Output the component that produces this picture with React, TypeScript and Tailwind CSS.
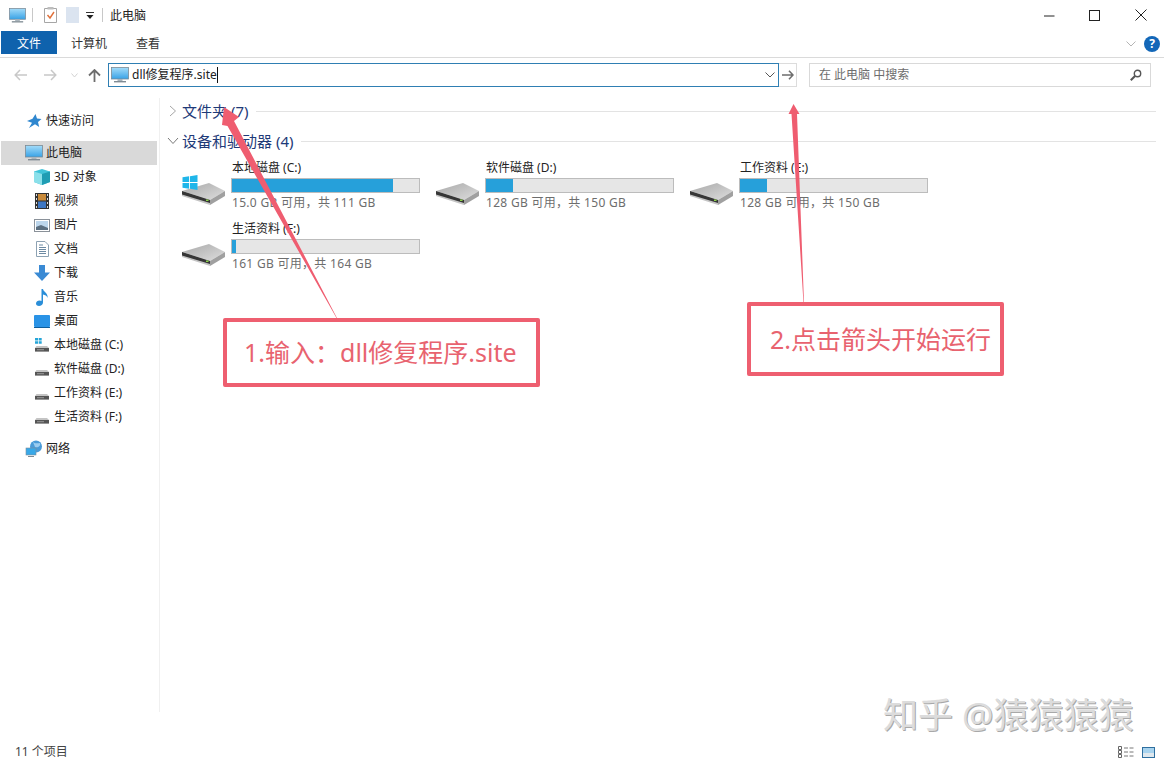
import React from "react";

function Pc({ s = 18 }: { s?: number }) {
  const id = `pc${s}`;
  return (
    <svg width={s} height={s} viewBox="0 0 18 18" className="shrink-0">
      <defs>
        <linearGradient id={id} x1="0" y1="0" x2="0" y2="1">
          <stop offset="0" stopColor="#a4dcf9" />
          <stop offset="1" stopColor="#38a2e6" />
        </linearGradient>
      </defs>
      <rect x="0.5" y="1.5" width="17" height="11.5" fill={`url(#${id})`} stroke="#7b8a96" strokeWidth="0.8" />
      <rect x="6.5" y="13" width="5" height="2" fill="#a9b4bc" />
      <rect x="3" y="15" width="12" height="1.4" fill="#7f8b94" />
    </svg>
  );
}

function Drive({ win }: { win?: boolean }) {
  return (
    <div className="relative w-[46px] h-[46px] shrink-0">
      <svg width="43" height="22" viewBox="0 0 43 22" className="absolute left-[1px] top-[22px]">
        <defs>
          <linearGradient id="dtop" x1="0" y1="0" x2="1" y2="1">
            <stop offset="0" stopColor="#a8a8a8" />
            <stop offset="1" stopColor="#dedede" />
          </linearGradient>
        </defs>
        <path d="M0 8 27 0 43 8 28 17Z" fill="url(#dtop)" />
        <path d="M0 8 28 17 28 22 0 13Z" fill="#c4c4c4" />
        <path d="M0 8 28 17 28 20 0 11.500Z" fill="#363636" />
        <path d="M28 17 43 8 43 13 28 22Z" fill="#a0a0a0" />
        <rect x="24" y="16.500" width="2.500" height="1.500" fill="#8ad04a" />
      </svg>
      {win && (
        <svg width="16" height="15" viewBox="0 0 17 17" className="absolute left-[1px] top-[14px]">
          <path d="M0 2.500 7.500 1.400V8H0ZM8.500 1.300 17 0V8H8.500ZM0 9H7.500V15.600L0 14.500ZM8.500 9H17V17L8.500 15.700Z" fill="#1fb6ea" />
        </svg>
      )}
    </div>
  );
}

function SmallDrive({ win }: { win?: boolean }) {
  return (
    <svg width="16" height="16" viewBox="0 0 16 16" className="shrink-0">
      {win && (
        <path d="M1 1h3v2.500H1ZM4.700 1h3v2.500H4.700ZM1 4.200h3v2.500H1ZM4.700 4.200h3v2.500H4.700Z" fill="#25a5d8" />
      )}
      <path d="M2.500 9 13 9 15 11 1 11Z" fill="#c4c4c4" />
      <rect x="1" y="11" width="14" height="3.600" fill="#555" />
      <rect x="3" y="12.200" width="7" height="1" fill="#999" />
    </svg>
  );
}

function NavIcon({ name }: { name: string }) {
  switch (name) {
    case "star":
      return (
        <svg width="16" height="16" viewBox="0 0 16 16" className="shrink-0">
          <path d="M9.500 1 11 5.500 15.500 6 12 9 13.200 14 9 11.300 3 15 6 9.800 1 8 6.500 5.800Z" fill="#2f87cf" />
        </svg>
      );
    case "cube":
      return (
        <svg width="18" height="18" viewBox="0 0 18 18" className="shrink-0">
          <path d="M1 3.500 9 1 17 3.500 17 14 9 17 1 14Z" fill="#3fc3d8" />
          <path d="M1 3.500 9 6 9 17 1 14Z" fill="#8be0ea" />
          <path d="M9 6 17 3.500 17 14 9 17Z" fill="#1f9db3" />
        </svg>
      );
    case "video":
      return (
        <svg width="14" height="16" viewBox="0 0 14 16" className="shrink-0">
          <rect width="14" height="16" fill="#333" />
          <rect x="3" y="1" width="8" height="6.500" fill="#c98a3a" />
          <rect x="3" y="8.500" width="8" height="6.500" fill="#3f78c4" />
          <path d="M1 1h1v2H1ZM1 5h1v2H1ZM1 9h1v2H1ZM1 13h1v2H1ZM12 1h1v2h-1ZM12 5h1v2h-1ZM12 9h1v2h-1ZM12 13h1v2h-1Z" fill="#ddd" />
        </svg>
      );
    case "pic":
      return (
        <svg width="16" height="13" viewBox="0 0 16 13" className="shrink-0">
          <rect x="0.500" y="0.500" width="15" height="12" fill="#fff" stroke="#8a9199" />
          <rect x="2" y="2" width="12" height="9" fill="#bcd6ec" />
          <path d="M2 8 7 6 14 9V11H2Z" fill="#5b6f80" />
        </svg>
      );
    case "doc":
      return (
        <svg width="13" height="16" viewBox="0 0 13 16" className="shrink-0">
          <path d="M.5.5H9L12.500 4V15.500H.5Z" fill="#fff" stroke="#8da2b3" />
          <path d="M3 4h4M3 6.500h7M3 8.500h7M3 10.500h7M3 12.500h7" stroke="#6d8aa3" strokeWidth="1" />
        </svg>
      );
    case "down":
      return (
        <svg width="16" height="16" viewBox="0 0 16 16" className="shrink-0">
          <path d="M5 0H11V7.500H16L8 16 0 7.500H5Z" fill="#3a8ad4" />
        </svg>
      );
    case "music":
      return (
        <svg width="13" height="17" viewBox="0 0 13 17" className="shrink-0">
          <path d="M5.500 0H7C7.300 3 12.500 4 11.500 9 11 6.500 9 6 7 5.500V13.500C7 15.500 5 17 3 17 1 17 0 16 0 14.500 0 12.800 1.800 11.600 3.500 11.600 4.400 11.600 5 11.800 5.500 12.100Z" fill="#2a8ed8" />
        </svg>
      );
    case "desk":
      return (
        <svg width="16" height="13" viewBox="0 0 16 13" className="shrink-0">
          <rect width="16" height="12" rx="1" fill="#2a93e6" />
          <rect x="0" y="12" width="16" height="1" fill="#0e5d9c" />
        </svg>
      );
    case "net":
      return (
        <svg width="18" height="18" viewBox="0 0 18 18" className="shrink-0">
          <circle cx="11" cy="6.500" r="6" fill="#4a9bd8" />
          <path d="M8 2C10 4 13 3 15 3 16 6 13 8 10 7Z" fill="#9ccdf0" />
          <rect x="1" y="8" width="10" height="7" fill="#38a8e8" stroke="#7d8d99" strokeWidth="0.6" />
          <rect x="3" y="16" width="6" height="1" fill="#7f8b94" />
        </svg>
      );
    default:
      return null;
  }
}

type Item = { label: string; icon: React.ReactNode };

const libs: Item[] = [
  { label: "3D 对象", icon: <NavIcon name="cube" /> },
  { label: "视频", icon: <NavIcon name="video" /> },
  { label: "图片", icon: <NavIcon name="pic" /> },
  { label: "文档", icon: <NavIcon name="doc" /> },
  { label: "下载", icon: <NavIcon name="down" /> },
  { label: "音乐", icon: <NavIcon name="music" /> },
  { label: "桌面", icon: <NavIcon name="desk" /> },
  { label: "本地磁盘 (C:)", icon: <SmallDrive win /> },
  { label: "软件磁盘 (D:)", icon: <SmallDrive /> },
  { label: "工作资料 (E:)", icon: <SmallDrive /> },
  { label: "生活资料 (F:)", icon: <SmallDrive /> },
];

function NavRow({ item }: { item: Item }) {
  return (
    <div className="h-[24px] flex items-center pl-[33px]">
      <span className="w-[18px] flex justify-center shrink-0">{item.icon}</span>
      <span className="ml-[3px] text-[12px] text-[#222]">{item.label}</span>
    </div>
  );
}

function DriveTile({ name, pct, info, win }: { name: string; pct: string; info: string; win?: boolean }) {
  return (
    <div className="w-[254px] h-[61px] flex items-start">
      <Drive win={win} />
      <div className="ml-[4px] w-[189px] -mt-[1px]">
        <div className="pl-[1px] text-[12px] leading-[16px] text-[#222] h-[18px] whitespace-nowrap">{name}</div>
        <div className="h-[15px] bg-[#e6e6e6] border border-[#bcbcbc]">
          <div className="h-full bg-[#26a0da]" style={{ width: pct }} />
        </div>
        <div className="pl-[1px] text-[12px] leading-[16px] mt-[2px] text-[#6d6d6d] whitespace-nowrap tracking-[0.3px]">{info}</div>
      </div>
    </div>
  );
}

function Chevron({ open }: { open?: boolean }) {
  return open ? (
    <svg width="12" height="8" viewBox="0 0 12 8" className="shrink-0"><path d="M1 1 6 6.500 11 1" fill="none" stroke="#7a7a7a" /></svg>
  ) : (
    <svg width="8" height="12" viewBox="0 0 8 12" className="shrink-0"><path d="M1 1 6.500 6 1 11" fill="none" stroke="#a6a6a6" /></svg>
  );
}

export default function App() {
  return (
    <div
      className="relative w-[1164px] h-[764px] bg-white overflow-hidden flex flex-col"
      style={{ fontFamily: '"Noto Sans", "Noto Sans CJK SC", sans-serif' }}
    >
      {/* title bar */}
      <div className="h-[31px] flex items-center shrink-0 pl-[9px] pb-[1px]">
        <Pc s={17} />
        <span className="ml-[6px] w-px h-[14px] bg-[#c8c8c8]" />
        <svg width="13" height="16" viewBox="0 0 13 16" className="ml-[11px]">
          <path d="M.5 1.500H12.500V15.500H.5Z" fill="#fff" stroke="#a6a6a6" />
          <rect x="3.500" y="0" width="6" height="2.500" fill="#bdbdbd" />
          <path d="M3.500 8 6 11 10 5" fill="none" stroke="#e0703a" strokeWidth="1.400" />
        </svg>
        <svg width="13" height="16" viewBox="0 0 13 16" className="ml-[9px]">
          <rect width="13" height="16" fill="#dbe4f0" />
        </svg>
        <svg width="8" height="8" viewBox="0 0 8 8" className="ml-[7px] mt-[2px]">
          <path d="M0 0.500H8" stroke="#333" />
          <path d="M0.500 3H7.500L4 7Z" fill="#222" />
        </svg>
        <span className="ml-[8px] w-px h-[14px] bg-[#c8c8c8]" />
        <span className="ml-[7px] text-[12px] text-[#222] mt-[2px]">此电脑</span>
        <div className="ml-auto flex items-center pr-[17px]">
          <svg width="11" height="11" viewBox="0 0 11 11"><path d="M0 6H10.500" stroke="#222" /></svg>
          <svg width="11" height="11" viewBox="0 0 11 11" className="ml-[34px]"><rect x="0.500" y="0.500" width="10" height="10" fill="none" stroke="#222" /></svg>
          <svg width="12" height="12" viewBox="0 0 12 12" className="ml-[35px]"><path d="M.5.5 11.500 11.500M11.500.5.5 11.500" stroke="#222" /></svg>
        </div>
      </div>

      {/* ribbon */}
      <div className="h-[27px] shrink-0 flex items-start border-b border-[#dadada] pl-[1px] relative">
        <div className="w-[56px] h-[23px] bg-[#0f62ad] text-white text-[12px] flex items-center justify-center pt-[2px]">文件</div>
        <div className="w-[64px] h-[23px] text-[12px] text-[#333] flex items-center justify-center pt-[2px]">计算机</div>
        <div className="w-[54px] h-[23px] text-[12px] text-[#333] flex items-center justify-center pt-[2px]">查看</div>
        <div className="ml-auto flex items-center h-[25px] pr-[4px]">
          <svg width="10" height="6" viewBox="0 0 10 6"><path d="M.5.5 5 5 9.500.5" fill="none" stroke="#b4b4b4" /></svg>
          <span className="ml-[8px] w-[16px] h-[16px] rounded-full bg-[#1367b8] text-white text-[12px] font-bold leading-[16px] text-center">?</span>
        </div>
      </div>

      {/* address row */}
      <div className="h-[40px] shrink-0 flex items-start pt-[5px] pl-[14px]">
        <div className="h-[24px] w-[94px] flex items-center shrink-0">
          <svg width="13" height="12" viewBox="0 0 13 12"><path d="M6 1 1.200 6 6 11M1.500 6H13" fill="none" stroke="#c8c8c8" strokeWidth="1.500" /></svg>
          <svg width="13" height="12" viewBox="0 0 13 12" className="ml-[17px]"><path d="M7 1 11.800 6 7 11M0 6H11.500" fill="none" stroke="#c8c8c8" strokeWidth="1.500" /></svg>
          <svg width="7" height="5" viewBox="0 0 7 5" className="ml-[14px]"><path d="M.5.5 3.500 4 6.500.5" fill="none" stroke="#d2d2d2" /></svg>
          <svg width="13" height="13" viewBox="0 0 13 13" className="ml-[10px]"><path d="M1 6.500 6.500 1 12 6.500M6.500 1.500V13" fill="none" stroke="#6e6e6e" strokeWidth="1.800" /></svg>
        </div>
        <div className="w-[671px] h-[24px] border border-[#2f7fb3] flex items-center pl-[2px]">
          <Pc s={18} />
          <span className="ml-[3px] text-[12px] text-[#222]">dll修复程序.site</span>
          <span className="w-px h-[16px] bg-[#111]" />
          <svg width="10" height="6" viewBox="0 0 10 6" className="ml-auto mr-[3px]"><path d="M.5.5 5 5 9.500.5" fill="none" stroke="#555" /></svg>
        </div>
        <div className="w-[18px] h-[24px] border border-l-0 border-[#dcdcdc] flex items-center justify-center">
          <svg width="12" height="10" viewBox="0 0 12 10"><path d="M7 .8 11 5 7 9.200M0 5H10.500" fill="none" stroke="#6e6e6e" strokeWidth="1.600" /></svg>
        </div>
        <div className="ml-[12px] w-[342px] h-[24px] border border-[#d9d9d9] flex items-center pl-[9px] pr-[8px]">
          <span className="text-[12px] text-[#6d6d6d]">在 此电脑 中搜索</span>
          <svg width="12" height="12" viewBox="0 0 12 12" className="ml-auto"><circle cx="7.500" cy="4.500" r="3.200" fill="none" stroke="#555" strokeWidth="1.400" /><path d="M5 7 .8 11.200" stroke="#555" strokeWidth="2" /></svg>
        </div>
      </div>

      {/* main */}
      <div className="flex-1 flex min-h-0">
        <nav className="w-[160px] shrink-0 border-r border-[#f0f0f0] pt-[11px] mb-[26px] pr-[2px]">
          <div className="h-[24px] flex items-center pl-[26px]">
            <NavIcon name="star" />
            <span className="ml-[4px] text-[12px] text-[#222]">快速访问</span>
          </div>
          <div className="h-[24px] mt-[8px] ml-[1px] bg-[#d9d9d9] flex items-center pl-[24px]">
            <Pc s={18} />
            <span className="ml-[3px] text-[12px] text-[#222]">此电脑</span>
          </div>
          {libs.map((it) => (
            <NavRow key={it.label} item={it} />
          ))}
          <div className="h-[24px] mt-[8px] flex items-center pl-[25px]">
            <NavIcon name="net" />
            <span className="ml-[3px] text-[12px] text-[#222]">网络</span>
          </div>
        </nav>
        <section className="flex-1 pl-[6px] pr-[8px]">
          <div className="h-[26px] flex items-center">
            <span className="w-[13px] flex justify-center"><Chevron /></span>
            <span className="ml-[3px] text-[15px] text-[#1e3a78] whitespace-nowrap">文件夹 (7)</span>
            <span className="ml-[8px] flex-1 h-px bg-[#e3e3e3]" />
          </div>
          <div className="h-[30px] mt-[2px] flex items-center">
            <span className="w-[13px] flex justify-center"><Chevron open /></span>
            <span className="ml-[3px] text-[15px] text-[#1e3a78] whitespace-nowrap">设备和驱动器 (4)</span>
            <span className="ml-[8px] flex-1 h-px bg-[#e3e3e3]" />
          </div>
          <div className="pl-[15px] pt-[5px] flex flex-wrap w-[783px]">
            <DriveTile name="本地磁盘 (C:)" pct="86%" info="15.0 GB 可用，共 111 GB" win />
            <DriveTile name="软件磁盘 (D:)" pct="14.5%" info="128 GB 可用，共 150 GB" />
            <DriveTile name="工作资料 (E:)" pct="14.5%" info="128 GB 可用，共 150 GB" />
            <DriveTile name="生活资料 (F:)" pct="2%" info="161 GB 可用，共 164 GB" />
          </div>
        </section>
      </div>

      {/* status bar */}
      <div className="h-[26px] shrink-0 flex items-center pl-[15px] pr-[9px] pt-[2px] text-[12px] text-[#444]">
        <span>11 个项目</span>
        <svg width="16" height="12" viewBox="0 0 16 12" className="ml-auto">
          <path d="M.5.5h3v3h-3ZM.5 4.500h3v3h-3ZM.5 8.500h3v3h-3Z" fill="none" stroke="#666" />
          <path d="M6 2h4M11.500 2h4M6 6h4M11.500 6h4M6 10h4M11.500 10h4" stroke="#777" />
        </svg>
        <svg width="13" height="11" viewBox="0 0 13 11" className="ml-[8px]">
          <rect width="13" height="11" fill="#2f6f9f" />
          <rect x="1" y="1" width="11" height="5" fill="#a8d3ee" />
          <rect x="1" y="6" width="11" height="4" fill="#dfe8ee" />
        </svg>
      </div>

      {/* annotation arrows */}
      <svg width="1164" height="764" viewBox="0 0 1164 764" className="absolute inset-0 pointer-events-none">
        <path d="M224 107 239 117 234 121 337 318 336.500 318 227.500 126 222 125Z" fill="#ef5d70" />
        <path d="M793.500 104 799.500 114 797 114 804 303 803.500 303 791.500 114 788.500 114Z" fill="#ef5d70" />
      </svg>

      {/* annotation boxes */}
      <div className="absolute left-[223px] top-[318px] w-[317px] h-[69px] border-[4px] border-[#ee5f70] rounded-[2px] bg-white flex items-center pl-[17px]">
        <span className="text-[25px] leading-none text-[#e8636f] whitespace-nowrap">1.输入：dll修复程序.site</span>
      </div>
      <div className="absolute left-[747px] top-[302px] w-[257px] h-[74px] border-[4px] border-[#ee5f70] rounded-[2px] bg-white flex items-center pl-[19px]">
        <span className="text-[25px] leading-none text-[#e8636f] whitespace-nowrap">2.点击箭头开始运行</span>
      </div>

      {/* watermark */}
      <div className="absolute left-[883px] top-[695px] text-[35px] leading-[40px] text-[#dcdcdc] whitespace-nowrap [text-shadow:1px_1px_0_#a8a8a8]">
        知乎 @猿猿猿猿
      </div>
    </div>
  );
}
